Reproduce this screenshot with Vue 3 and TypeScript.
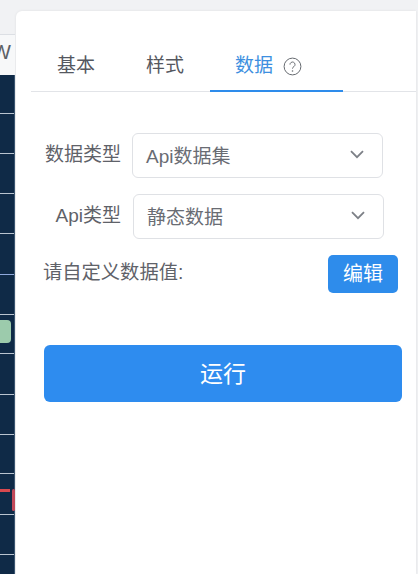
<script setup lang="ts">
const rows: number[] = [39, 40, 40, 40, 41, 40, 39, 41, 40, 39, 41, 40]
const tabs = [
  { name: '基本', cls: 'tab-a' },
  { name: '样式', cls: 'tab-b' },
]
</script>

<template>
  <div class="page">
    <aside class="strip">
      <div class="strip-head"><span class="w">W</span></div>
      <div class="grid">
        <div v-for="(h, i) in rows" :key="i" class="grid-row" :class="{ hot: i === 4 }" :style="{ height: h + 'px' }"></div>
        <span class="chip"></span>
        <span class="red"></span>
        <span class="red-v"></span>
      </div>
    </aside>
    <main class="panel">
      <nav class="tabs">
        <div v-for="t in tabs" :key="t.name" class="tab" :class="t.cls">{{ t.name }}</div>
        <div class="tab active">
          数据
          <svg class="help" width="19" height="19" viewBox="0 0 19 19" fill="none">
            <circle cx="9.5" cy="9.5" r="8.4" stroke="#666a70" stroke-width="1" />
            <path d="M7 7.6a2.5 2.5 0 1 1 3.9 2c-.9.6-1.4 1-1.4 2" stroke="#666a70" stroke-width="1" />
            <circle cx="9.5" cy="14" r=".8" fill="#666a70" />
          </svg>
        </div>
      </nav>
      <div class="form">
        <div class="field first">
          <label class="label">数据类型</label>
          <div class="select">
            <span>Api数据集</span>
            <svg width="14" height="9" viewBox="0 0 14 9" fill="none"><path d="M1 1.2l6 6 6-6" stroke="#7d8087" stroke-width="1.8" /></svg>
          </div>
        </div>
        <div class="field second">
          <label class="label">Api类型</label>
          <div class="select">
            <span>静态数据</span>
            <svg width="14" height="9" viewBox="0 0 14 9" fill="none"><path d="M1 1.2l6 6 6-6" stroke="#7d8087" stroke-width="1.8" /></svg>
          </div>
        </div>
        <div class="custom">
          <span class="custom-label">请自定义数据值:</span>
          <button class="edit" type="button">编辑</button>
        </div>
        <button class="run" type="button">运行</button>
      </div>
    </main>
  </div>
</template>

<style scoped>
.page {
  position: relative;
  display: flex;
  width: 418px;
  height: 574px;
  overflow: hidden;
  background: #f1f2f4;
  font-family: "Liberation Sans", "Noto Sans CJK SC", sans-serif;
}
.strip {
  width: 15px;
  flex: none;
  display: flex;
  flex-direction: column;
  padding-top: 34px;
  box-sizing: border-box;
  overflow: hidden;
}
.strip-head {
  position: relative;
  flex: none;
  height: 41px;
  box-sizing: border-box;
  border-top: 1px solid #dcdfe4;
  background: #f7f8f9;
  color: #5d6066;
  font-size: 20px;
  line-height: 34px;
  overflow: hidden;
}
.w {
  position: absolute;
  right: 4px;
  top: 0;
}
.grid {
  position: relative;
  flex: 1;
  background: #0f2a47;
  border-right: 1px solid #3a5570;
}
.grid-row {
  box-sizing: border-box;
  border-bottom: 1px solid #b9c4d0;
}
.grid-row.hot {
  border-bottom-color: #8fa9dc;
}
.chip {
  position: absolute;
  left: -6px;
  top: 245px;
  width: 17px;
  height: 23px;
  border-radius: 4px;
  background: #9ccbac;
}
.red {
  position: absolute;
  left: 0;
  top: 414px;
  width: 10px;
  height: 3px;
  background: #d8494f;
}
.red-v {
  position: absolute;
  left: 12px;
  top: 414px;
  width: 3px;
  height: 22px;
  background: #c2495a;
  border-radius: 2px;
}
.panel {
  flex: none;
  width: 400px;
  margin-top: 11px;
  margin-left: 1px;
  padding-top: 29px;
  box-sizing: border-box;
  background: #fff;
  border-radius: 6px 0 0 0;
  box-shadow: 0 0 3px rgba(0, 0, 0, 0.08);
}
.tabs {
  display: flex;
  margin-left: 15px;
  height: 52px;
  box-sizing: border-box;
  border-bottom: 1px solid #e2e4e8;
  font-size: 19px;
  color: #55585f;
}
.tab {
  height: 52px;
  box-sizing: border-box;
  padding-top: 13px;
  line-height: 26px;
}
.tab-a {
  width: 90px;
  padding-left: 26px;
}
.tab-b {
  width: 89px;
  padding-left: 25px;
}
.active {
  display: flex;
  align-items: flex-start;
  width: 133px;
  padding-left: 25px;
  color: #3d8fe0;
  border-bottom: 2px solid #2e8ceb;
}
.help {
  margin: 4px 0 0 10px;
}
.form {
  padding: 41px 0 0 28px;
}
.field {
  display: flex;
  align-items: center;
}
.first {
  height: 45px;
}
.second {
  height: 45px;
  margin-top: 16px;
}
.label {
  width: 77px;
  margin-right: 11px;
  text-align: right;
  font-size: 19px;
  color: #5f6269;
  white-space: nowrap;
  position: relative;
  top: -3px;
}
.second .label {
  margin-right: 12px;
}
.select {
  display: flex;
  align-items: center;
  justify-content: space-between;
  width: 251px;
  height: 45px;
  box-sizing: border-box;
  padding: 0 18px 2px 13px;
  border: 1px solid #dfe1e5;
  border-radius: 6px;
  font-size: 19px;
  color: #696c73;
}
.custom {
  display: flex;
  align-items: center;
  justify-content: space-between;
  width: 354px;
  height: 38px;
  margin-top: 16px;
}
.custom-label {
  font-size: 19.3px;
  color: #5f6269;
  position: relative;
  top: -3px;
  left: -1px;
}
.edit {
  width: 70px;
  height: 38px;
  padding: 0 0 4px;
  border: none;
  border-radius: 5px;
  background: #2e8ceb;
  color: #fff;
  font: inherit;
  font-size: 20px;
}
.run {
  display: block;
  width: 358px;
  height: 57px;
  margin-top: 52px;
  padding: 0 0 4px;
  border: none;
  border-radius: 6px;
  background: #2e8cef;
  color: #fff;
  font: inherit;
  font-size: 23px;
}
</style>
